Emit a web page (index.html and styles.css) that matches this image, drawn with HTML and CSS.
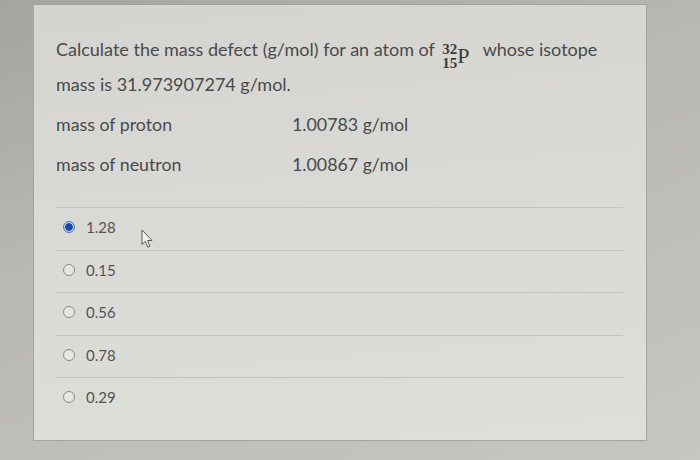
FILE: index.html
```html
<!DOCTYPE html>
<html lang="en">
<head>
<meta charset="utf-8">
<title>Quiz question</title>
<link rel="stylesheet" href="styles.css">
</head>
<body>
<div class="card">
  <p class="question">Calculate the mass defect (g/mol) for an atom of <span class="iso"><span class="nums"><span class="num">32</span><span class="num">15</span></span><span class="sym">P</span></span> whose isotope mass is 31.973907274 g/mol.</p>
  <div class="data">
    <div class="row"><span class="label">mass of proton</span><span class="value">1.00783 g/mol</span></div>
    <div class="row"><span class="label">mass of neutron</span><span class="value">1.00867 g/mol</span></div>
  </div>
  <ul class="options">
    <li class="option selected"><span class="radio"></span><span class="opt-text">1.28</span>
      <svg class="cursor" width="12" height="20" viewBox="0 0 12 20"><path d="M1 1 L1 15.5 L4.3 12.3 L6.8 18.2 L9 17.2 L6.5 11.5 L11 11.5 Z" fill="#f2f3ef" stroke="#5a5a5a" stroke-width="1" stroke-linejoin="round"/></svg>
    </li>
    <li class="option"><span class="radio"></span><span class="opt-text">0.15</span></li>
    <li class="option"><span class="radio"></span><span class="opt-text">0.56</span></li>
    <li class="option"><span class="radio"></span><span class="opt-text">0.78</span></li>
    <li class="option"><span class="radio"></span><span class="opt-text">0.29</span></li>
  </ul>
</div>
</body>
</html>
```

FILE: styles.css
```css
html, body {
  margin: 0;
  padding: 0;
}
body {
  width: 700px;
  height: 460px;
  overflow: hidden;
  background: linear-gradient(160deg, #a6a4a1 0%, #b9b8b4 40%, #c6c7c1 100%);
  font-family: Lato, "Open Sans", "Liberation Sans", sans-serif;
  color: #4a4a4d;
}
.card {
  box-sizing: border-box;
  margin: 4px 0 0 33px;
  width: 614px;
  height: 437px;
  border: 1px solid #a4a4a0;
  background: linear-gradient(175deg, #d5d4d0 0%, #d9d9d5 45%, #dddfd9 100%);
  padding: 27px 0 0 22px;
}
.question {
  margin: 0;
  width: 552px;
  font-size: 18px;
  line-height: 34px;
}
.iso {
  margin-left: 3px;
  margin-right: 9px;
  font-family: "Liberation Serif", "DejaVu Serif", serif;
  color: #3b3b3e;
}
.nums {
  display: inline-block;
  vertical-align: -12px;
  margin-bottom: -5px;
  font-size: 15px;
  line-height: 14px;
  font-weight: bold;
  text-align: right;
}
.num {
  display: block;
}
.sym {
  font-size: 22px;
  line-height: 0;
  vertical-align: -7px;
}
.data {
  margin-top: 3px;
}
.row {
  display: flex;
  height: 40px;
  line-height: 40px;
  font-size: 17.8px;
}
.label {
  width: 236px;
}
.options {
  list-style: none;
  margin: 23px 0 0 0;
  padding: 0;
  width: 567px;
}
.option {
  position: relative;
  box-sizing: border-box;
  display: flex;
  align-items: center;
  height: 42.5px;
  padding-bottom: 3px;
  border-top: 1px solid #c3c4bf;
  font-size: 15px;
}
.radio {
  box-sizing: border-box;
  width: 12px;
  height: 12px;
  margin-left: 7px;
  margin-right: 11px;
  border-radius: 50%;
  border: 1.5px solid #8b8b89;
  background: #e6e6e2;
}
.option.selected .radio {
  border: 1px solid #5478bf;
  background: radial-gradient(circle, #1d48a6 0 3.5px, #b7c9ea 4px 100%);
}
.opt-text {
  color: #535458;
}
.cursor {
  position: absolute;
  left: 85px;
  top: 21px;
}
```
